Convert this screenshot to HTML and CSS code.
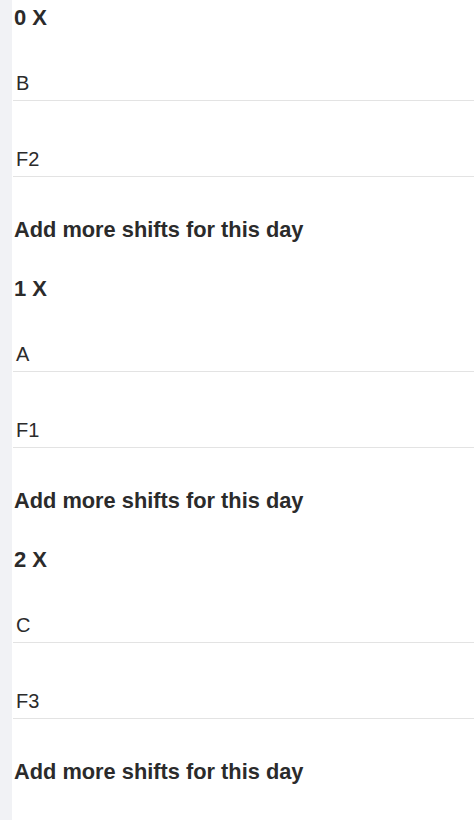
FILE: index.html
```html
<!DOCTYPE html>
<html>
<head>
<meta charset="utf-8">
<link rel="stylesheet" href="styles.css">
</head>
<body>
<div class="page">
  <div class="rail"></div>
  <div class="content">
    <section class="day">
      <div class="day-title">0 X</div>
      <div class="shift">B</div>
      <div class="shift">F2</div>
      <div class="add">Add more shifts for this day</div>
    </section>
    <section class="day">
      <div class="day-title">1 X</div>
      <div class="shift">A</div>
      <div class="shift">F1</div>
      <div class="add">Add more shifts for this day</div>
    </section>
    <section class="day">
      <div class="day-title">2 X</div>
      <div class="shift">C</div>
      <div class="shift">F3</div>
      <div class="add">Add more shifts for this day</div>
    </section>
  </div>
</div>
</body>
</html>
```
FILE: styles.css
```css
html, body {
  margin: 0;
  padding: 0;
  background: #ffffff;
}
body {
  font-family: "Liberation Sans", Arial, sans-serif;
  color: #2b2b2b;
}
.page {
  display: flex;
  min-height: 820px;
}
.rail {
  width: 12px;
  flex: 0 0 12px;
  background: #f1f2f5;
}
.content {
  flex: 1;
  padding-left: 1px;
}
.day-title {
  font-weight: bold;
  font-size: 22px;
  line-height: 15px;
  padding: 10px 0 0 1px;
}
.shift {
  font-size: 20px;
  line-height: 24px;
  padding: 46px 0 5px 3px;
  border-bottom: 1px solid #e3e3e3;
}
.add {
  font-weight: bold;
  font-size: 21.8px;
  line-height: 24px;
  padding: 41px 0 29px 1px;
}
```
